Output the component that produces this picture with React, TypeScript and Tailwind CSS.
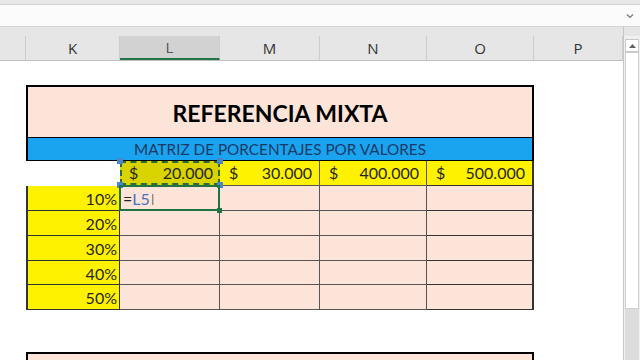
import React from "react";

const cols = [
  { l: "K", w: 94 },
  { l: "L", w: 100 },
  { l: "M", w: 100 },
  { l: "N", w: 107 },
  { l: "O", w: 107 },
  { l: "P", w: 89 },
];

const cellFont = { fontFamily: "Lato, 'Open Sans', sans-serif" };

function Money({ v, dark }: { v: string; dark?: boolean }) {
  return (
    <div
      className={`flex h-full items-center justify-between pl-[9px] pr-[7px] text-[16px] text-[#262626] ${dark ? "bg-[#d9d300]" : "bg-[#fff200]"}`}
    >
      <span>$</span>
      <span>{v}</span>
    </div>
  );
}

export default function App() {
  const pcts = ["10%", "20%", "30%", "40%", "50%"];
  const rowH = [25, 25, 25, 24, 25];
  return (
    <div className="relative h-[360px] w-[640px] overflow-hidden bg-white" style={{ fontFamily: "'Open Sans', sans-serif" }}>
      {/* top strip */}
      <div className="h-[5px] border-b border-[#d2d2d2] bg-[#e8e8e8]" />
      {/* formula bar */}
      <div className="flex h-[22px] items-center justify-end border-b border-[#d4d4d4] bg-[#fbfbfb] pr-[6px]">
        <svg width="8" height="6" viewBox="0 0 8 6">
          <path d="M1 1.5 L4 4.5 L7 1.5" stroke="#777" strokeWidth="1.2" fill="none" />
        </svg>
      </div>
      <div className="flex">
        <div className="w-[623px]">
          {/* column header band */}
          <div className="h-[9px] bg-[#e6e6e6]" />
          <div className="flex h-[25px] border-b border-[#bfbfbf] bg-[#e6e6e6] text-[15px] text-[#333]">
            <div className="w-[26px] border-r border-[#cdcdcd]" />
            {cols.map((c) => (
              <div
                key={c.l}
                className={`flex shrink-0 items-center justify-center border-r border-[#cdcdcd] ${c.l === "L" ? "border-b-2 border-b-[#217346] bg-[#d2d2d2] text-[#555]" : ""}`}
                style={{ width: c.w }}
              >
                {c.l}
              </div>
            ))}
          </div>
          {/* sheet */}
          <div className="pl-[26px] pt-[24px]" style={cellFont}>
            <div className="w-[508px]">
              <div className="flex h-[52px] items-center justify-center border-x-2 border-t-2 border-black bg-[#fde4d8] pt-[2px] text-[23px] font-bold text-black">
                REFERENCIA MIXTA
              </div>
              <div className="flex h-[24px] items-center justify-center border-x-2 border-y border-black bg-[#1aa3ee] text-[15.3px] text-[#1b3a66]">
                MATRIZ DE PORCENTAJES POR VALORES
              </div>
              {/* row 5 */}
              <div className="flex h-[25px]">
                <div className="w-[94px] shrink-0" />
                <div className="relative w-[100px] shrink-0 border-b border-[#555]">
                  <Money v="20.000" dark />
                  <div className="pointer-events-none absolute inset-[0px] border-2 border-dashed border-[#2e6b3a]" />
                  <div className="absolute left-[-3px] top-[-3px] h-[6px] w-[6px] bg-[#4a86c8]" />
                  <div className="absolute right-[-3px] top-[-3px] h-[6px] w-[6px] bg-[#4a86c8]" />
                  <div className="absolute bottom-[-3px] left-[-3px] z-10 h-[6px] w-[6px] bg-[#4a86c8]" />
                  <div className="absolute bottom-[-3px] right-[-3px] z-10 h-[6px] w-[6px] bg-[#4a86c8]" />
                </div>
                <div className="w-[100px] shrink-0 border-b border-r border-[#555]">
                  <Money v="30.000" />
                </div>
                <div className="w-[107px] shrink-0 border-b border-r border-[#555]">
                  <Money v="400.000" />
                </div>
                <div className="w-[107px] shrink-0 border-b border-r-2 border-[#333]">
                  <Money v="500.000" />
                </div>
              </div>
              {pcts.map((p, i) => (
                <div key={p} className="flex" style={{ height: rowH[i] }}>
                  <div className="flex w-[94px] shrink-0 items-center justify-end border-b border-l-2 border-r border-[#333] bg-[#fff200] pr-[2px] pt-[2px] text-[16px] text-[#262626]">
                    {p}
                  </div>
                  <div className="relative w-[100px] shrink-0 border-b border-r border-[#555] bg-[#fde4d8]">
                    {i === 0 && (
                      <>
                        <div className="absolute inset-[-1px] z-10 border-2 border-[#217346]" />
                        <div className="absolute left-[3px] top-0 flex h-full items-center pt-[2px] text-[16px]">
                          <span className="text-[#262626]">=</span>
                          <span className="text-[#4a6fc0]">L5</span>
                          <span className="ml-[1px] text-[15px] font-light text-[#444]">I</span>
                        </div>
                        <div className="absolute bottom-[-3px] right-[-3px] z-20 h-[5px] w-[5px] bg-[#217346]" />
                      </>
                    )}
                  </div>
                  <div className="w-[100px] shrink-0 border-b border-r border-[#555] bg-[#fde4d8]" />
                  <div className="w-[107px] shrink-0 border-b border-r border-[#555] bg-[#fde4d8]" />
                  <div className="w-[107px] shrink-0 border-b border-r-2 border-[#333] bg-[#fde4d8]" />
                </div>
              ))}
              <div className="h-[42px]" />
              <div className="h-[20px] border-x-2 border-t-2 border-black bg-[#fde4d8]" />
            </div>
          </div>
        </div>
        {/* vertical scrollbar */}
        <div className="flex w-[17px] flex-col border-l border-[#c6c6c6] bg-[#f0f0f0]">
          <div className="h-[9px] bg-[#e6e6e6]" />
          <div className="mx-[1px] mt-[3px] flex h-[13px] items-center justify-center border border-[#c9c9c9] bg-white">
            <svg width="7" height="4" viewBox="0 0 7 4">
              <path d="M0 4 L3.5 0 L7 4 Z" fill="#606060" />
            </svg>
          </div>
          <div className="mx-[1px] h-[257px] border border-[#cfcfcf] bg-white" />
          <div className="mx-[1px] flex-1 bg-[#dcdcdc]" />
        </div>
      </div>
    </div>
  );
}
